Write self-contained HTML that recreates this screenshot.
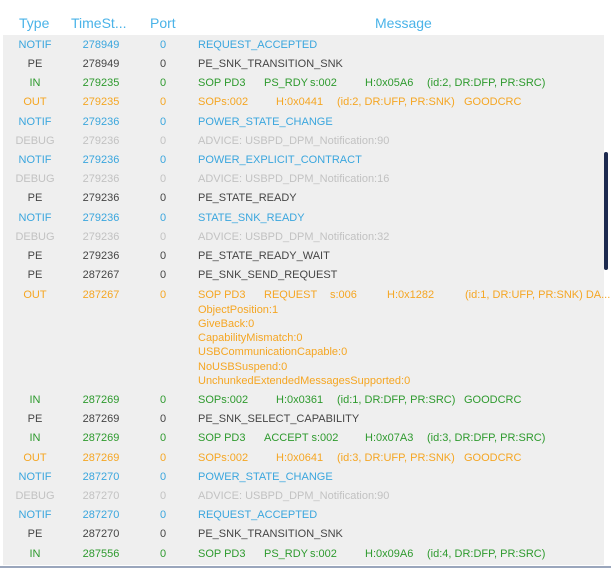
<!DOCTYPE html><html><head><style>
body{margin:0;width:611px;height:568px;background:#fff;font-family:"Liberation Sans",sans-serif;font-size:11px;position:relative;overflow:hidden}
.h{position:absolute;top:15px;font-size:14px;color:#4ab3e8}
.bg{position:absolute;left:3px;top:35px;width:601px;height:530px;background:#efefef}
.r{position:absolute;height:16px;line-height:16px;white-space:nowrap}
.r span{position:absolute;top:0}
.t{width:70px;left:0;text-align:center}
.ts{width:60px;left:71px;text-align:center}
.p{left:160px}
.b{color:#3aa6de}.k{color:#454545}.g{color:#2e9a2e}.o{color:#f5a623}.d{color:#c2c2c2}
.sb{position:absolute;left:604px;top:152px;width:4px;height:118px;background:#1d2a4f;border-radius:2px}
.bl{position:absolute;left:0;top:566px;width:611px;height:2px;background:#9aa6bc}
</style></head><body>
<div class="h" style="left:19px">Type</div>
<div class="h" style="left:71px">TimeSt...</div>
<div class="h" style="left:150px">Port</div>
<div class="h" style="left:375px">Message</div>
<div class="bg"></div>
<div id="rows"></div>
<div class="sb"></div>
<div class="bl"></div>
<script>
var R=[
[45,'b','NOTIF','278949',[[198,'REQUEST_ACCEPTED']]],
[64,'k','PE','278949',[[198,'PE_SNK_TRANSITION_SNK']]],
[83,'g','IN','279235',[[198,'SOP PD3'],[264,'PS_RDY'],[310,'s:002'],[365,'H:0x05A6'],[427,'(id:2, DR:DFP, PR:SRC)']]],
[102,'o','OUT','279235',[[198,'SOPs:002'],[276,'H:0x0441'],[337,'(id:2, DR:UFP, PR:SNK)'],[464,'GOODCRC']]],
[122,'b','NOTIF','279236',[[198,'POWER_STATE_CHANGE']]],
[141,'d','DEBUG','279236',[[198,'ADVICE: USBPD_DPM_Notification:90']]],
[160,'b','NOTIF','279236',[[198,'POWER_EXPLICIT_CONTRACT']]],
[179,'d','DEBUG','279236',[[198,'ADVICE: USBPD_DPM_Notification:16']]],
[198,'k','PE','279236',[[198,'PE_STATE_READY']]],
[218,'b','NOTIF','279236',[[198,'STATE_SNK_READY']]],
[237,'d','DEBUG','279236',[[198,'ADVICE: USBPD_DPM_Notification:32']]],
[256,'k','PE','279236',[[198,'PE_STATE_READY_WAIT']]],
[275,'k','PE','287267',[[198,'PE_SNK_SEND_REQUEST']]],
[295,'o','OUT','287267',[[198,'SOP PD3'],[264,'REQUEST'],[330,'s:006'],[387,'H:0x1282'],[465,'(id:1, DR:UFP, PR:SNK)  DA...']]],
[310,'o','','',[[198,'ObjectPosition:1']]],
[324,'o','','',[[198,'GiveBack:0']]],
[338,'o','','',[[198,'CapabilityMismatch:0']]],
[352,'o','','',[[198,'USBCommunicationCapable:0']]],
[367,'o','','',[[198,'NoUSBSuspend:0']]],
[381,'o','','',[[198,'UnchunkedExtendedMessagesSupported:0']]],
[400,'g','IN','287269',[[198,'SOPs:002'],[276,'H:0x0361'],[337,'(id:1, DR:DFP, PR:SRC)'],[464,'GOODCRC']]],
[419,'k','PE','287269',[[198,'PE_SNK_SELECT_CAPABILITY']]],
[438,'g','IN','287269',[[198,'SOP PD3'],[264,'ACCEPT s:002'],[365,'H:0x07A3'],[427,'(id:3, DR:DFP, PR:SRC)']]],
[458,'o','OUT','287269',[[198,'SOPs:002'],[276,'H:0x0641'],[337,'(id:3, DR:UFP, PR:SNK)'],[464,'GOODCRC']]],
[477,'b','NOTIF','287270',[[198,'POWER_STATE_CHANGE']]],
[496,'d','DEBUG','287270',[[198,'ADVICE: USBPD_DPM_Notification:90']]],
[515,'b','NOTIF','287270',[[198,'REQUEST_ACCEPTED']]],
[534,'k','PE','287270',[[198,'PE_SNK_TRANSITION_SNK']]],
[554,'g','IN','287556',[[198,'SOP PD3'],[264,'PS_RDY'],[310,'s:002'],[365,'H:0x09A6'],[427,'(id:4, DR:DFP, PR:SRC)']]]
];
var h='';R.forEach(function(r){
h+='<div class="r '+r[1]+'" style="top:'+(r[0]-8)+'px;left:0;width:604px">';
if(r[2]){h+='<span class="t">'+r[2]+'</span><span class="ts">'+r[3]+'</span><span class="p">0</span>';}
r[4].forEach(function(m){h+='<span style="left:'+m[0]+'px">'+m[1]+'</span>'});
h+='</div>'});
document.getElementById('rows').innerHTML=h;
</script>
</body></html>
